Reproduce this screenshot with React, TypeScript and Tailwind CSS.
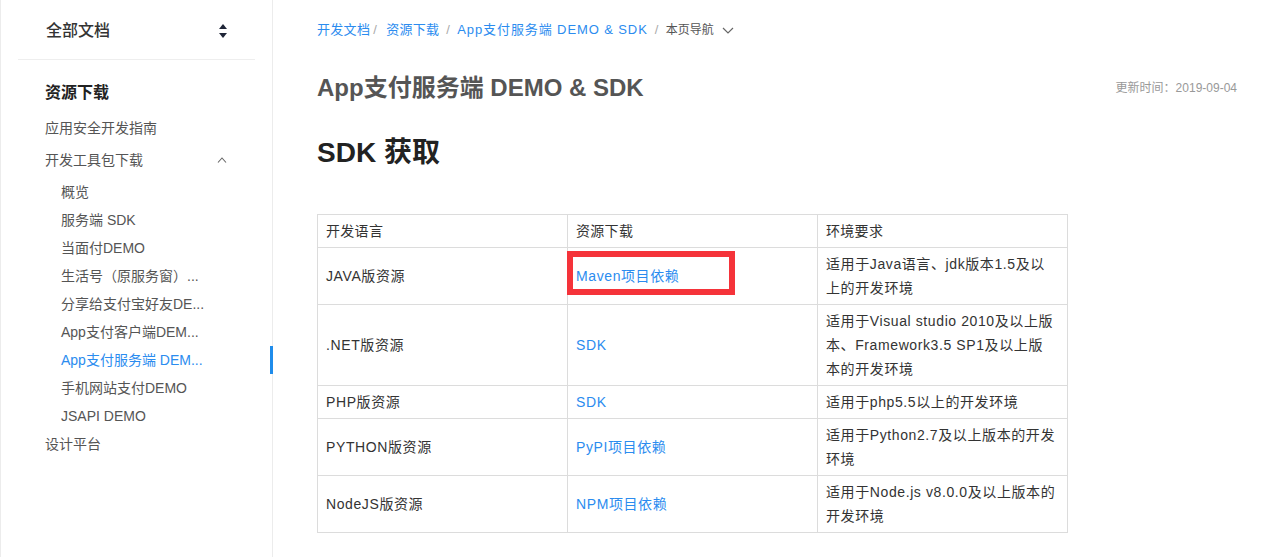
const font = { fontFamily: '"Liberation Sans", "Noto Sans CJK SC", sans-serif' };

// labels are shown as the page shows them, already shortened
const subItems = [
  "概览",
  "服务端 SDK",
  "当面付DEMO",
  "生活号（原服务窗）...",
  "分享给支付宝好友DE...",
  "App支付客户端DEM...",
  "App支付服务端 DEM...",
  "手机网站支付DEMO",
  "JSAPI DEMO",
];

const rows = [
  { lang: "JAVA版资源", link: "Maven项目依赖", env: ["适用于Java语言、jdk版本1.5及以", "上的开发环境"], mark: true },
  { lang: ".NET版资源", link: "SDK", env: ["适用于Visual studio 2010及以上版", "本、Framework3.5 SP1及以上版", "本的开发环境"] },
  { lang: "PHP版资源", link: "SDK", env: ["适用于php5.5以上的开发环境"] },
  { lang: "PYTHON版资源", link: "PyPI项目依赖", env: ["适用于Python2.7及以上版本的开发", "环境"] },
  { lang: "NodeJS版资源", link: "NPM项目依赖", env: ["适用于Node.js v8.0.0及以上版本的", "开发环境"] },
];

function Sidebar() {
  return (
    <aside className="w-[273px] shrink-0 h-full border-l border-r border-[#ececec] bg-white">
      <div className="mx-[17px] h-[60px] flex items-center justify-between border-b border-[#eeeeee] pl-[28px] pr-[28px] pt-[2px]">
        <span className="text-[16px] font-medium text-[#333]">全部文档</span>
        <svg width="8" height="14" viewBox="0 0 8 14">
          <path d="M4 0 L8 5 L0 5 Z" fill="#1f2538" />
          <path d="M0 9 L8 9 L4 14 Z" fill="#1f2538" />
        </svg>
      </div>
      <div className="pt-[17px]">
        <div className="h-[32px] flex items-center pl-[44px] text-[16px] font-bold text-[#222]">资源下载</div>
        <div className="mt-[3px] h-[32px] flex items-center pl-[44px] text-[14px] text-[#555]">应用安全开发指南</div>
        <div className="h-[32px] flex items-center justify-between pl-[44px] pr-[45px] text-[14px] text-[#555]">
          <span>开发工具包下载</span>
          <svg width="10" height="6" viewBox="0 0 10 6">
            <path d="M1 5.5 L5 1 L9 5.5" fill="none" stroke="#666" strokeWidth="1.1" />
          </svg>
        </div>
        <div className="mt-[2px]">
          {subItems.map((s) => {
            const active = s.startsWith("App支付服务端");
            return (
              <div key={s} className="relative h-[28px] flex items-center pl-[60px] text-[14px]">
                <span className={"whitespace-nowrap " + (active ? "text-[#2b8cef]" : "text-[#555]")}>{s}</span>
                {active && <span className="absolute right-[-1px] top-0 h-[28px] w-[3px] bg-[#1f8ceb]" />}
              </div>
            );
          })}
        </div>
        <div className="h-[28px] flex items-center pl-[44px] text-[14px] text-[#555]">设计平台</div>
      </div>
    </aside>
  );
}

export default function App() {
  return (
    <div className="h-[557px] w-full flex bg-white overflow-hidden" style={font}>
      <Sidebar />
      <main className="flex-1 pl-[44px] pr-[48px]">
        <nav className="h-[60px] flex items-center text-[13px] tracking-[0.3px]">
          <a className="text-[#2b8cef]">开发文档</a>
          <span className="text-[#aaa] ml-[3px] mr-[9px]">/</span>
          <a className="text-[#2b8cef]">资源下载</a>
          <span className="text-[#aaa] mx-[7px]">/</span>
          <a className="text-[#2b8cef] tracking-[0.9px]">App支付服务端 DEMO &amp; SDK</a>
          <span className="text-[#aaa] mx-[7px]">/</span>
          <span className="text-[12px] text-[#555] tracking-normal">本页导航</span>
          <svg className="ml-[8px]" width="12" height="7" viewBox="0 0 12 7">
            <path d="M1 1 L6 6 L11 1" fill="none" stroke="#666" strokeWidth="1.2" />
          </svg>
        </nav>
        <div className="mt-[12px] h-[32px] flex items-center justify-between">
          <h1 className="text-[24px] font-bold text-[#555]">App支付服务端 DEMO &amp; SDK</h1>
          <span className="text-[12px] text-[#999]">更新时间：2019-09-04</span>
        </div>
        <h2 className="mt-[29px] h-[40px] flex items-center text-[28px] font-bold text-[#222]">SDK 获取</h2>
        <table className="mt-[41px] w-[751px] table-fixed border-collapse text-[14px] tracking-[0.6px] text-[#333] leading-[24px]">
          <tbody>
            <tr>
              {["开发语言", "资源下载", "环境要求"].map((h) => (
                <td key={h} className="border border-[#dcdcdc] px-[8px] py-[4px] text-left font-normal tracking-[0.3px]">{h}</td>
              ))}
            </tr>
            {rows.map((r) => (
              <tr key={r.lang}>
                <td className="border border-[#dcdcdc] px-[8px] py-[4px]">{r.lang}</td>
                <td className="border border-[#dcdcdc] px-[8px] py-[4px] relative">
                  <a className="text-[#2b8cef]">{r.link}</a>
                  {r.mark && (
                    <span className="absolute left-[-1px] top-[3px] w-[168px] h-[44px] border-[6px] border-[#f5333a]" />
                  )}
                </td>
                <td className="border border-[#dcdcdc] px-[8px] py-[4px]">
                  {r.env.map((l) => (
                    <div key={l} className="whitespace-nowrap">{l}</div>
                  ))}
                </td>
              </tr>
            ))}
          </tbody>
        </table>
      </main>
    </div>
  );
}
